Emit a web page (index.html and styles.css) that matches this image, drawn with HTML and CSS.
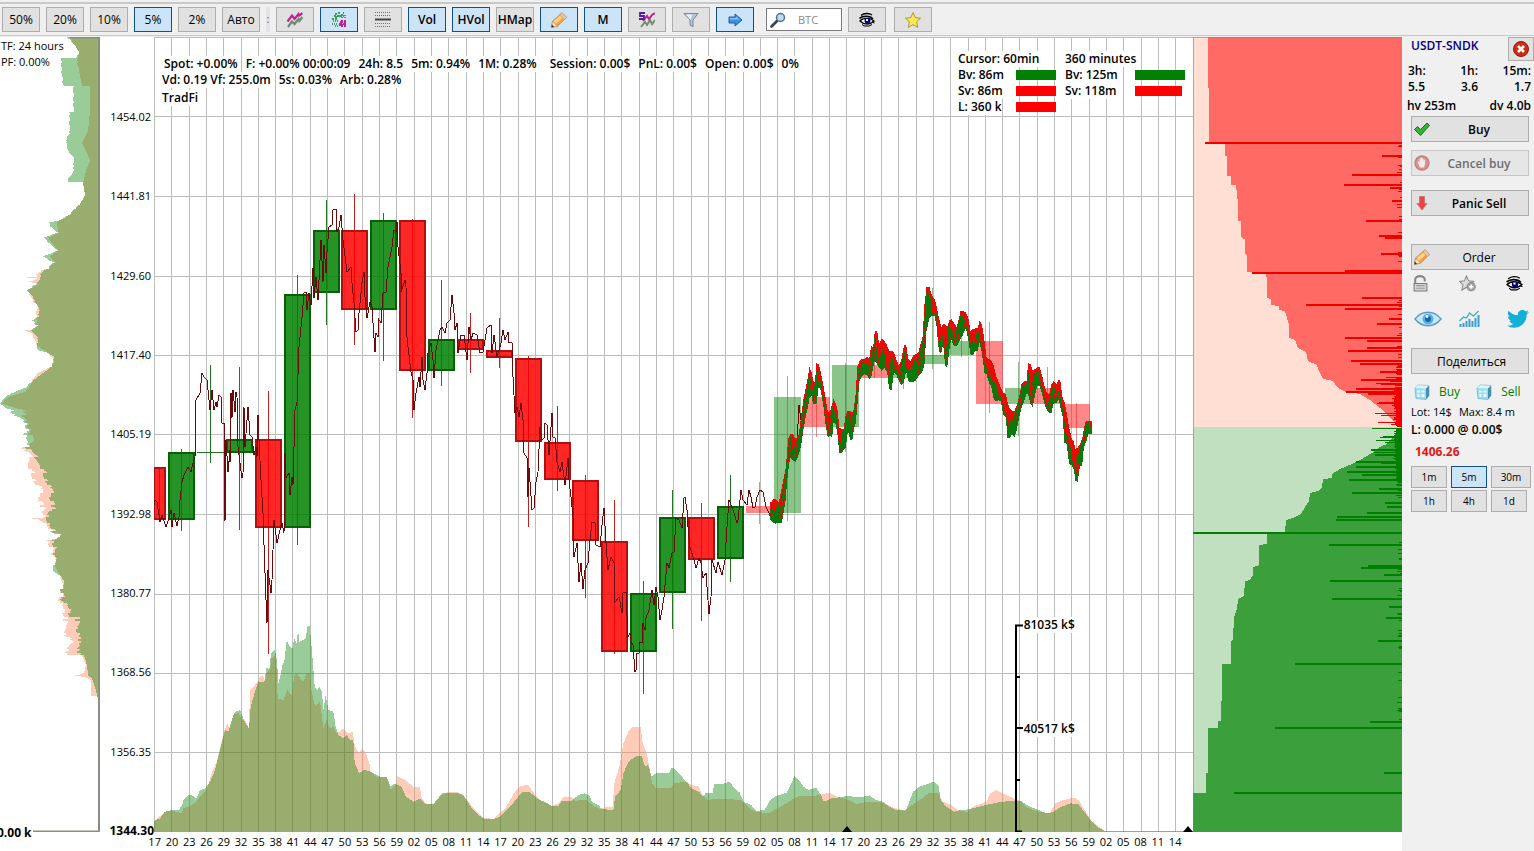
FILE: index.html
```
<!DOCTYPE html>
<html lang="ru">
<head>
<meta charset="utf-8">
<title>USDT-SNDK</title>
<link rel="stylesheet" href="styles.css">
</head>
<body>
<svg class="defs" aria-hidden="true">
  <symbol id="i-eye" viewBox="0 0 16 16">
    <path d="M2 3.500C5 1 10 .8 13 3" fill="none" stroke="#000" stroke-width="1.300"/>
    <path d="M.5 6.500C4 3.500 11 3.500 14 7" fill="none" stroke="#000" stroke-width="1.600"/>
    <path d="M1 9C4 5.500 11 5.500 15 9C11 13 5 13 1 9Z" fill="#fff" stroke="#000" stroke-width="1.300"/>
    <circle cx="8.500" cy="8.800" r="3" fill="#00007a"/><rect x="7" y="7" width="2" height="2" fill="#fff"/>
    <path d="M3 12.500l2 1.500h5l3-1.500M13 10l2.500 1" fill="none" stroke="#000"/>
  </symbol>
  <symbol id="i-pencil" viewBox="0 0 16 16">
    <path d="M.5 15.500L1.500 9 11 .8l4.600 4.700L6.500 14.200Z" fill="#f2a03c" stroke="#c98a45" stroke-width=".7"/>
    <path d="M2.500 9.300L11 2l2.300 2.300L5 12Z" fill="#ffd08a"/>
    <path d="M8.800 2.800L11.200.7l4.500 4.700-2.400 2.300Z" fill="#e9c6a6" stroke="#b98d66" stroke-width=".6"/>
    <path d="M.5 15.500l1-6.300 5 4.900Z" fill="#f8e3c3" stroke="#a88a62" stroke-width=".6"/><path d="M.4 15.600l.4-3 2.300 2.200Z" fill="#333"/>
  </symbol>
  <symbol id="i-cube" viewBox="0 0 16 16">
    <path d="M1 4l3-3 11 .5v10L12 15.500 2 14.500Z" fill="#9bdcf0" stroke="#78b4cc" stroke-width=".8"/>
    <path d="M1 4l11 .5L15 1.800 4 1.200Z" fill="#dcf5fc"/><path d="M12 4.500L15 1.800v9.700L12 15.300Z" fill="#4a8fae"/>
    <path d="M3 6.500h3v2H3zm4.500 0h3v2h-3zM3.500 10h2v3h-2zm4 0h3v3h-3z" fill="#e9fbff"/>
  </symbol>
</svg>

<header class="toolbar">
  <button class="btn">50%</button>
  <button class="btn">20%</button>
  <button class="btn">10%</button>
  <button class="btn on">5%</button>
  <button class="btn">2%</button>
  <button class="btn">Авто</button>
  <span class="grip">:</span>
  <button class="btn" aria-label="Lines"><svg class="ico" viewBox="0 0 16 16"><path d="M1 15l4-5.500 2.500 2.500 4-5 .8 2L15.500 5" fill="none" stroke="#708a70" stroke-width="2.200"/><path d="M.5 9.500l4.500-6 2.500 3.500 4-5 .8 1.500L15.500 1" fill="none" stroke="#c3218e" stroke-width="2.200"/></svg></button>
  <button class="btn on" aria-label="Clusters"><svg class="ico" viewBox="0 0 16 16"><g fill="none" stroke-width="2"><path d="M5 1v6M8 0v5M11 2v4M3 4h10M1 7h6" stroke="#3f9e5c" stroke-dasharray="2 1"/><path d="M14 3v3M12 1h2" stroke="#7a7a7a" stroke-dasharray="1 1"/><path d="M2 9h6M1 12h5M4 14h3" stroke="#4ba36a" stroke-dasharray="1 1"/><path d="M8 13h2M9 10h6M8 12h7M11 8v7M14 8v8" stroke="#c3218e" stroke-dasharray="3 1"/></g></svg></button>
  <button class="btn" aria-label="Levels"><svg class="ico" viewBox="0 0 16 16"><path d="M0 .5h16M0 3.500h16M0 11.500h16M0 14.500h16" stroke="#b33fc0" stroke-dasharray="1 1"/><path d="M0 7.500h16" stroke="#444" stroke-width="2"/></svg></button>
  <button class="btn on strong">Vol</button>
  <button class="btn on strong">HVol</button>
  <button class="btn strong">HMap</button>
  <button class="btn on" aria-label="Draw"><svg class="ico"><use href="#i-pencil"/></svg></button>
  <button class="btn on strong">M</button>
  <button class="btn" aria-label="Spread"><svg class="ico" viewBox="0 0 16 16"><path d="M2 15l4-5 2 3 3-5 2 4 3-4" fill="none" stroke="#6f8f6f" stroke-width="2"/><path d="M4 9l4-5 2 3 3-4 3-2" fill="none" stroke="#c3218e" stroke-width="2"/><path d="M6 1H1v3h4v3H0" fill="none" stroke="#5a1a9a" stroke-width="1.800"/></svg></button>
  <button class="btn" aria-label="Filter"><svg class="ico" viewBox="0 0 16 16"><path d="M1 1.500h14L10 8v7l-3-2V8Z" fill="#b4c3da" stroke="#7787a0"/><path d="M3 2.500h6L7.500 8Z" fill="#eef3fa"/></svg></button>
  <button class="btn on" aria-label="Forward"><svg class="ico" viewBox="0 0 16 16"><path d="M2 5h6V2l7 6-7 6v-3H2Z" fill="#3f8fe0" stroke="#1f5fae"/><path d="M3 6h6V4.500L12.500 7.500H3Z" fill="#85c1f5"/></svg></button>
  <label class="search"><svg class="ico" viewBox="0 0 16 16"><path d="M1.500 14.500L7 9" stroke="#345" stroke-width="2.600" stroke-linecap="round"/><circle cx="10.500" cy="5.500" r="4" fill="#b9dcf2" stroke="#52718c" stroke-width="1.500"/></svg><input type="text" placeholder="BTC" aria-label="BTC"></label>
  <button class="btn" aria-label="Watch"><svg class="ico"><use href="#i-eye"/></svg></button>
  <button class="btn spaced" aria-label="Favourites"><svg class="ico" viewBox="0 0 16 16"><path d="M8 .6l2.300 5 5.300.6-4 3.600 1.200 5.600L8 12.700l-4.800 2.700 1.200-5.600-4-3.600 5.300-.6Z" fill="#fbe94f" stroke="#a8983f"/></svg></button>
</header>

<main class="workspace">
  <section class="profile">
    <svg id="profile" viewBox="0 37 100 795" preserveAspectRatio="none"></svg>
    <p class="profile-info">TF: 24 hours<br>PF: 0.00%</p>
    <b class="profile-zero">0.00 k</b>
  </section>

  <div class="prices">
    <span>1454.02</span><span>1441.81</span><span>1429.60</span><span>1417.40</span><span>1405.19</span><span>1392.98</span><span>1380.77</span><span>1368.56</span><span>1356.35</span><b>1344.30</b>
  </div>

  <section class="plot">
    <svg id="plot" viewBox="154 37 1039 795" preserveAspectRatio="none"></svg>
    <div class="stats">
      <p class="lead"><span>Spot: +0.00%</span><span>F: +0.00% 00:00:09</span><span>24h: 8.5</span><span>5m: 0.94%</span><span>1M: 0.28%</span><span class="apart">Session: 0.00$</span><span>PnL: 0.00$</span><span>Open: 0.00$</span><span>0%</span></p>
      <p><span>Vd: 0.19 Vf: 255.0m</span><span>5s: 0.03%</span><span>Arb: 0.28%</span></p>
      <p class="tag"><span>TradFi</span></p>
    </div>
    <div class="legend">
      <span class="wide">Cursor: 60min</span><span class="wide">360 minutes</span>
      <span>Bv: 86m</span><i class="bar buy"></i><span>Bv: 125m</span><i class="bar buy long"></i>
      <span>Sv: 86m</span><i class="bar sell"></i><span>Sv: 118m</span><i class="bar sell mid"></i>
      <span>L: 360 k</span><i class="bar sell"></i>
    </div>
    <div class="scale"><b>81035 k$</b><b>40517 k$</b></div>
  </section>

  <section class="depth"><svg id="depth" viewBox="1193 37 209 795" preserveAspectRatio="none"></svg></section>
  <div class="times" id="times"></div>

  <aside class="side">
    <div class="head"><h1>USDT-SNDK</h1><button class="btn close" aria-label="Close"><svg class="ico" viewBox="0 0 16 16"><circle cx="8" cy="8" r="7.500" fill="#cf2a12" stroke="#8e1c0c"/><path d="M5 5l6 6M11 5l-6 6" stroke="#fff" stroke-width="2.600"/></svg></button></div>
    <div class="deltas"><span>3h:</span><span>1h:</span><span>15m:</span><span>5.5</span><span>3.6</span><span>1.7</span></div>
    <div class="totals"><span>hv 253m</span><span>dv 4.0b</span></div>
    <button class="act strong"><svg class="ico" viewBox="0 0 16 16"><path d="M.6 8.500L3.500 5.500l3 3L13 2l2.500 2.500L6.500 14.500Z" fill="#35b335" stroke="#14751b"/></svg><span>Buy</span></button>
    <button class="act strong cancel" disabled><svg class="ico" viewBox="0 0 16 16"><circle cx="8" cy="8" r="7" fill="#dc8f8f" stroke="#c08080" stroke-width="1.300"/><path d="M3.500 7l1-1 1 1.500V4l1-.5V7V3l1-.5 1 .5v4-3.500l1 .2V7l.5-2.500 1 .2V9l-1 3.500H6Z" fill="#f8eaea"/></svg><span>Cancel buy</span></button>
    <button class="act strong panic"><svg class="ico" viewBox="0 0 16 16"><path d="M5.500 1.500h5v7H13l-5 6.500-5-6.500h2.500Z" fill="#ee4343" stroke="#c47878"/></svg><span>Panic Sell</span></button>
    <button class="act order"><svg class="ico"><use href="#i-pencil"/></svg><span>Order</span></button>
    <div class="icons small">
      <svg viewBox="0 0 16 16"><path d="M3 8V4.500a4.500 3.500 0 0 1 9 0V6" fill="none" stroke="#888" stroke-width="2"/><path d="M2 8h12v7H2Z" fill="#d6d6d6" stroke="#777"/><path d="M4 10h8M4 12.500h8" stroke="#999"/></svg>
      <svg viewBox="0 0 16 16"><path d="M7 1l2 4.500 4.800.5-3.600 3.300 1 5L7 11.500l-4.300 2.800 1-5L.5 6l4.600-.5Z" fill="#ddd" stroke="#888"/><circle cx="11.500" cy="11" r="3.800" fill="#aaa" stroke="#888"/><path d="M11.500 9v4M9.500 11h4" stroke="#fff" stroke-width="1.300"/></svg>
      <svg><use href="#i-eye"/></svg>
    </div>
    <div class="icons big">
      <svg viewBox="0 0 28 18"><path d="M1 9C8 0 20 0 27 9C20 18 8 18 1 9Z" fill="#c8e8fa" stroke="#5d9bc2" stroke-width="1.400"/><circle cx="14" cy="9" r="5.500" fill="#5bb0e8"/><circle cx="14" cy="9" r="3" fill="#1768ad"/><circle cx="13" cy="6.500" r="1.400" fill="#fff"/></svg>
      <svg class="sq" viewBox="0 0 20 18"><path d="M0 17v-3h2v3zm3 0v-4h2v4zm3 0v-6h2v6zm3 0V9h2v8zm3 0v-6h2v6zm3 0V8h2v9zm3 0V5h2v12z" fill="#3d9fd0"/><path d="M0 11l4-4 3 1 3-5 4 3 5-5" fill="none" stroke="#3fb6bd" stroke-width="1.400"/></svg>
      <svg class="bird" viewBox="0 0 24 20"><path d="M24 2.400c-.9.400-1.800.7-2.800.8 1-.6 1.800-1.600 2.200-2.700-1 .6-2 1-3.100 1.200A4.900 4.900 0 0 0 11.900 6C7.800 5.800 4.200 3.900 1.700.9.400 3.200 1 6 3.200 7.500c-.8 0-1.600-.2-2.200-.6 0 2.300 1.600 4.400 3.900 4.900-.7.200-1.500.2-2.200.1.600 2 2.400 3.400 4.600 3.400A9.900 9.900 0 0 1 0 17.300C9 22.800 21.700 17.300 21.500 4.900 22.500 4.200 23.300 3.400 24 2.400Z" fill="#12afd6"/></svg>
    </div>
    <button class="act share"><span>Поделиться</span></button>
    <div class="cubes"><svg class="ico"><use href="#i-cube"/></svg><span>Buy</span><svg class="ico"><use href="#i-cube"/></svg><span>Sell</span></div>
    <p class="lot"><span>Lot: 14$</span><span>Max: 8.4 m</span></p>
    <p class="pos">L: 0.000 @ 0.00$</p>
    <p class="last">1406.26</p>
    <div class="frames">
      <button class="tf">1m</button><button class="tf on">5m</button><button class="tf wide">30m</button>
      <button class="tf">1h</button><button class="tf">4h</button><button class="tf">1d</button>
    </div>
  </aside>
</main>
<script src="chart.js"></script>
</body>
</html>
```
FILE: styles.css
```
* { box-sizing: border-box; }
body { margin: 0; height: 100vh; display: flex; flex-direction: column; background: #f0f0f0; color: #000; font: 12px/16px "Open Sans", "Noto Sans", sans-serif; overflow: hidden; }
p, h1 { margin: 0; font-size: 12px; }
button, input { font: inherit; color: inherit; }
.defs { position: absolute; width: 0; height: 0; }
.ico { width: 16px; height: 16px; flex: none; }
.strong { font-weight: 600; }

.toolbar { flex: none; display: flex; align-items: center; gap: 6px; margin: 2px 0 1px; padding: 3px 2px; border-top: 2px solid #c9c9c9; border-bottom: 1px solid #c9c9c9; }
.btn { flex: none; width: 38px; height: 25px; padding: 0; display: flex; align-items: center; justify-content: center; background: #e1e1e1; border: 1px solid #adadad; white-space: nowrap; }
.on { background: #cce4f7; border-color: #0f5288; }
.grip { width: 4px; height: 25px; line-height: 23px; background: #e4e4e4; text-align: center; font-size: 11px; color: #555; }
.spaced { margin-left: 2px; }
.search { display: flex; align-items: center; gap: 3px; width: 76px; height: 23px; margin-left: 6px; padding: 0 3px; background: #fff; border: 1px solid #7a7a7a; }
.search input { min-width: 0; width: 50px; padding: 0 0 0 9px; border: 0; outline: 0; background: none; font-size: 11px; }
.search input::placeholder { color: #8a8a8a; }

.workspace { flex: 1; min-height: 0; display: grid; grid-template-columns: 100px 54px minmax(0, 1fr) 209px 132px; grid-template-rows: minmax(0, 1fr) 19px; }
.profile, .plot, .depth { position: relative; background: #fff; min-height: 0; }
.profile > svg, .plot > svg, .depth > svg { display: block; width: 100%; height: 100%; }
.profile { grid-column: 1; grid-row: 1; }
.profile-info { position: absolute; left: 1px; top: 1px; font-size: 11px; }
.profile-zero { position: absolute; left: -3px; bottom: -9px; padding-right: 1px; background: #fff; z-index: 1; }
.prices { grid-column: 2; grid-row: 1 / 3; display: flex; flex-direction: column; justify-content: space-between; align-items: flex-end; padding: 72px 0 12px; background: #fff; font-size: 11px; }
.prices span { padding-right: 3px; }
.prices b { font-size: 12px; }
.plot { grid-column: 3; grid-row: 1; }
.depth { grid-column: 4; grid-row: 1; }
.workspace::after { content: ""; grid-column: 1; grid-row: 2; background: #fff; }
.times { grid-column: 3 / 5; grid-row: 2; display: flex; background: #fff; padding-right: 210px; font-size: 11px; line-height: 19px; }
.times span { flex: 1; width: 0; display: flex; justify-content: center; position: relative; left: -8px; }

.stats { position: absolute; left: 8px; top: 19px; font-weight: 600; white-space: nowrap; }
.stats p { display: flex; gap: 8px; }
.stats span { background: #fff; }
.stats .lead { padding-left: 2px; }
.stats .apart { margin-left: 5px; }
.stats .tag { margin-top: 2px; }
.legend { position: absolute; right: 8px; top: 14px; width: 227px; display: grid; grid-template-columns: 58px 49px 70px 50px; align-items: center; font-weight: 600; white-space: nowrap; }
.legend span { justify-self: start; background: #fff; }
.legend .wide { grid-column: span 2; }
.bar { width: 40px; height: 10px; }
.long { width: 50px; }
.mid { width: 47px; }
.buy { background: #008000; }
.sell { background: #f00; }
.scale { position: absolute; left: 83.7%; top: 73%; height: 15%; display: flex; flex-direction: column; justify-content: space-between; font-weight: 600; }
.scale b { font-weight: 600; background: #fff; }

.side { grid-column: 5; grid-row: 1 / 3; display: flex; flex-direction: column; padding: 0 5px 0 9px; }
.head { display: flex; margin-right: -5px; justify-content: space-between; height: 26px; }
.head h1 { color: #00007f; font-weight: 600; padding-top: 1px; }
.close { width: 26px; height: 24px; }
.deltas, .totals { margin: 0 -2px 0 -4px; font-weight: 600; }
.deltas { display: grid; grid-template-columns: repeat(3, 1fr); text-align: right; margin-left: -3px; }
.deltas span:nth-child(3n+1) { text-align: left; }
.deltas span:nth-child(3n+2) { padding-right: 12px; }
.totals { display: flex; justify-content: space-between; margin-top: 3px; }
.act { display: flex; align-items: center; height: 26px; flex: none; padding: 0 3px; background: #e1e1e1; border: 1px solid #adadad; }
.act span { flex: 1; text-align: center; padding: 1px 0 0 3px; }
.act .ico { margin-left: -1px; }
.totals + .act { margin-top: 2px; }
.cancel { margin-top: 8px; color: #6d6d6d; background: #e6e6e6; border-color: #c4c4c4; }
.panic { margin-top: 14px; }
.order { margin-top: 28px; }
.icons { display: flex; justify-content: space-between; align-items: center; }
.small { height: 26px; padding: 0 6px 0 1px; }
.small svg { width: 17px; height: 17px; }
.big { height: 46px; margin: 0 0 6px; padding-left: 3px; }
.big svg { width: 28px; height: 18px; }
.big .sq { width: 21px; margin-right: 10px; }
.big .bird { width: 22px; height: 20px; }
.cubes { display: flex; align-items: center; gap: 9px; height: 36px; padding-left: 3px; color: #008000; }
.cubes span { margin-right: 7px; }
.lot { display: flex; gap: 7px; font-size: 11px; margin-top: -6px; }
.lot, .cubes, .pos { white-space: nowrap; }
.pos { font-weight: 600; margin-top: 2px; }
.last { color: #e01b1b; font-weight: 700; margin: 6px 0 6px 4px; }
.frames { display: grid; grid-template-columns: 36px 36px 36px; gap: 2px 4px; }
.tf { width: 36px; height: 22px; padding: 0; font-size: 10px; line-height: 12px; background: #e1e1e1; border: 1px solid #adadad; }
.tf.on { background: #cce4f7; border-color: #0f5288; }
.tf.wide { width: 40px; }
```
FILE: chart.js
```
const NS = 'http://www.w3.org/2000/svg';
function add(svg, tag, attrs) {
  const el = document.createElementNS(NS, tag);
  for (const k in attrs) el.setAttribute(k, attrs[k]);
  svg.appendChild(el);
  return el;
}
const nums = s => s.trim().split(/\s+/).map(p => p.split(',').map(Number));
let seed = 7;
const rnd = () => (seed = (seed * 16807) % 2147483647) / 2147483647;

// Linear interpolation of [key, value] pairs.
function at(points, k) {
  for (let i = 1; i < points.length; i++) {
    if (k <= points[i][0]) {
      const [a, va] = points[i - 1], [b, vb] = points[i];
      return b === a ? vb : va + (vb - va) * Math.max(0, k - a) / (b - a);
    }
  }
  return points[points.length - 1][1];
}
const GREEN = 'rgba(0,128,0,.4)', CORAL = 'rgba(255,127,80,.4)';

// Daily volume profile: y, left edge
const profileBuy = nums(`37,68 45,75 52,79 57,76 58,61 75,62 85,63 86,73 111,74 112,69 130,70 142,66 150,68 157,74 172,73 178,68 181,67 182,83 195,85 203,80 210,74 215,68 220,60 222,49 228,52 232,57 237,44 243,50 250,58 256,43 262,53 268,48 272,42 277,40 282,38 290,27 296,33 303,36 310,40 317,38 320,32 325,37 330,30 337,38 345,37 350,38 352,47 356,54 366,52 372,43 379,34 383,30 387,26 391,15 396,6 403,0 407,5 410,12 413,10 416,20 421,25 430,28 438,24 446,27 452,32 458,38 465,42 475,45 485,48 488,52 500,52 508,53 515,48 525,49 533,55 534,62 538,60 540,55 555,53 562,55 570,53 575,59 580,63 588,60 597,62 607,67 616,71 617,78 630,76 636,79 645,80 654,78 655,84 665,87 675,88 678,92 690,96 696,97`);
const profileSell = nums(`37,70 52,79 60,77 75,80 85,82 86,90 110,90 130,88 143,82 150,86 160,90 170,86 182,83 195,85 203,80 210,74 215,68 220,60 222,57 232,58 237,48 243,53 250,58 256,50 262,55 268,48 270,42 274,37 276,36 277,27 278,37 281,30 284,38 290,27 296,31 300,33 305,38 315,36 325,37 329,33 330,24 333,32 345,37 352,47 360,54 366,52 372,38 378,33 383,32 391,25 397,8 403,2 407,14 410,24 416,25 421,27 430,30 440,32 446,26 450,22 452,28 458,32 465,30 475,33 485,36 487,42 500,40 510,44 517,45 518,34 519,42 530,50 534,62 538,60 540,50 555,52 575,59 585,61 597,60 610,62 617,66 625,65 635,64 640,73 645,70 650,68 654,65 655,82 665,86 672,84 675,78 678,88 680,91 695,91 696,97`);
function drawProfile() {
  const svg = document.getElementById('profile');
  const jitter = [];
  for (let y = 37; y < 832; y++) jitter.push((rnd() - .5) * (y < 220 ? 1.500 : y < 520 ? 6 : 4));
  for (const [pts, color] of [[profileSell, CORAL], [profileBuy, GREEN]]) {
    let d = 'M100 37';
    for (let y = 37; y < 832; y++) {
      const base = y > 696 ? 98 : at(pts, y);
      const x = Math.max(0, Math.min(98, Math.round(base + (base < 80 ? jitter[y - 37 >> 1] : 0))));
      d += `L${x} ${y}V${y + 1}`;
    }
    add(svg, 'path', { d: d + 'L100 832Z', fill: color, 'shape-rendering': 'crispEdges' });
  }
  add(svg, 'path', { d: 'M100 37.500H70M99 37V831M30 831.500H99', fill: 'none', stroke: '#87907a', 'stroke-width': 2 });
}

// Candles: left, right, open/close top and bottom, wick top and bottom, side
const candles = `154,165,468,519,468,520,r 169,194,453,519,449,531,g 197,224,452,452,365,463,g 227,252,440,452,367,530,g 256,281,440,527,391,654,r 285,310,295,527,275,545,g 314,339,231,292,200,325,g 342,367,231,309,194,345,r 371,396,221,309,213,361,g 400,425,221,370,219,418,r 429,454,340,370,280,386,g 458,483,340,349,313,373,r 487,512,351,357,318,368,r 516,541,359,441,356,527,r 545,570,443,479,406,491,r 573,598,481,540,475,598,r 602,627,542,651,500,654,r 631,656,594,651,581,694,g 660,685,518,592,490,629,g 689,714,518,559,503,621,r 718,743,507,558,475,582,g`;
const paleCandles = `746,772,506,513,482,524,r 774,801,397,513,376,521,g 803,830,397,427,370,437,r 832,859,365,427,363,452,g 861,888,365,378,356,378,r 890,917,374,378,362,389,g 919,945,355,364,288,369,g 948,974,341,355,332,357,g 976,1003,341,404,322,413,r 1005,1031,388,404,362,436,g 1034,1060,388,404,367,406,r 1063,1090,404,428,403,479,r`;

const line1 = nums(`10,990 14,960 20,965 30,1025 36,1005 48,1040 58,1015 63,990 66,1042 72,1000 80,1038 86,1010 90,960 95,905 103,885 115,860 124,875 130,850 136,830 138,660 150,640 155,580 162,590 170,600 176,660 180,690 186,630 192,690 197,665 202,682 206,645 212,650 216,730 221,730 223,1020 226,1022 229,780 233,875 240,810 240,845 243,640 247,715 250,630 254,695 258,635 262,650 264,800 270,850 277,895 280,880 283,680 286,800 293,680 300,765 306,770 312,825 318,800 320,830 324,705 328,780 333,900 338,1000 342,1095 348,1260 352,1330 355,1170 362,1240 366,1200 372,1020 380,1090 390,1050 396,1030 402,1060 404,820 408,895 416,880 420,945 426,890 430,915 434,690 440,665 446,500 455,410 462,340 468,335 472,390 478,340 482,375 488,265 492,355 498,290 503,360 513,180 519,305 522,195 527,280 532,215 538,140 546,135 550,90 558,88 562,155 568,140 573,105 578,180 590,275 602,260 606,310 612,370 617,455 623,450 628,400 636,310 642,275 646,350 652,415 660,365 666,380 670,430 675,515 679,460 683,470 685,415 692,430 700,340 708,335 715,260 725,200 732,150 738,155 742,125 745,200 752,280 754,335 765,300 768,320 770,470 775,500 783,575 788,600 792,690 798,640 808,590 810,620 816,530 820,600 826,630 830,580 835,520 843,490 848,540 852,595 858,510 866,465 870,450 877,440 885,460 892,430 900,420 906,345 912,400 916,450 922,430 925,520 932,465 943,465 950,540 957,440 963,480 970,460 982,465 990,520 1000,515 1004,480 1012,445 1022,435 1026,520 1032,465 1042,530 1052,490 1060,450 1066,480 1073,455 1077,490 1085,485 1090,590 1094,700`).map(([x, y]) => [150 + x / 3, 180 + y / 3]);
const line2 = nums(`45,250 52,230 58,260 62,220 68,270 72,370 80,385 84,500 88,415 96,540 103,535 108,455 114,425 120,290 126,330 132,325 136,280 141,285 147,375 156,250 160,320 166,325 172,395 179,425 186,395 194,465 204,385 208,450 214,500 218,560 222,680 230,640 236,755 243,700 249,778 255,720 264,700 270,630 276,575 284,580 288,645 300,650 305,585 312,535 318,640 325,720 332,680 342,700 346,815 357,800 365,850 370,790 378,785 384,920 390,910 393,935 398,945 404,1025 409,1020 412,970 417,970 420,935 427,940 430,880 434,900 438,865 448,840 455,780 461,825 468,770 473,800 480,870 487,840 492,800 500,700 508,715 515,670 521,665 527,565 536,570 545,595 551,505 556,500 560,540 565,590 570,650 583,690 588,715 596,685 602,700 608,745 618,730 627,853 632,800 637,690 648,730 655,695 666,735 674,690 680,590 688,510 696,530 701,550 710,580 714,570 723,480 730,510 740,525 747,480 753,500 760,535 766,530 772,500 780,480 790,485 797,530 806,550 812,565 840,540 862,400 885,350 892,340 897,225 903,270 908,260`).map(([x, y]) => [500 + x / 3, 330 + y / 3]);

// Live price ribbon: x, top, bottom
const ribbon = nums(`92,700,748 97,690,755 105,690,758 115,700,755 124,655,755 130,625,720 135,600,690 139,560,640 143,510,600 149,495,560 158,495,570 166,510,572 175,495,550 182,440,525 188,395,480 196,355,435 202,325,410 207,295,380 213,310,375 218,335,400 223,340,400 228,283,395 235,285,345 241,310,360 248,345,400 255,385,460 262,430,500 269,425,495 275,405,500 279,390,455 286,405,460 292,425,500 296,475,545 302,480,548 309,480,538 316,435,530 322,425,480 329,425,505 335,430,510 340,420,475 346,370,455 350,295,410 357,275,330 364,268,315 372,270,310 380,262,312 386,270,325 392,230,320 398,235,290 403,185,270 410,185,280 416,225,290 424,208,300 432,215,290 440,230,305 446,245,355 453,245,358 460,250,305 467,270,310 475,290,330 482,275,342 490,230,335 497,228,300 503,270,330 510,275,333 518,260,332 526,255,328 534,250,315 540,225,310 546,205,300 552,105,280 558,55,180 567,55,140 574,78,135 582,90,135 588,110,165 595,145,240 602,175,248 608,165,220 614,165,285 620,175,290 626,155,240 632,150,205 640,160,225 648,175,225 655,150,215 660,125,205 668,125,190 676,130,170 684,150,210 690,185,250 697,180,252 704,178,240 711,178,240 717,157,215 724,165,245 732,215,305 738,265,310 745,270,335 752,275,345 760,290,385 767,320,390 774,340,388 781,355,390 788,370,430 796,375,440 801,400,500 808,420,502 815,425,490 822,425,497 828,410,480 836,385,440 843,345,410 851,335,390 858,335,370 863,282,370 870,285,400 877,305,408 884,300,370 890,295,345 898,295,345 906,325,375 912,350,400 918,370,415 926,375,425 933,345,425 940,335,395 948,345,395 955,330,385 960,340,410 966,385,435 972,400,515 978,430,518 986,475,580 994,510,582 1001,520,600 1004,540,630 1012,535,632 1018,525,585 1025,510,585 1030,480,530 1036,455,515 1044,455,490 1053,455,488`).map(([x, a, b]) => [740 + x / 3, 270 + a / 3, 270 + b / 3]);

const volLeft = ([x, y]) => [150 + x / 3, 610 + y / 3];
const volRight = ([x, y]) => [600 + x / 2.613, 610 + y / 3];
const volBuy = nums(`12,633 30,625 45,605 65,600 85,600 97,585 100,570 115,555 125,555 140,565 150,540 165,535 180,515 195,480 205,440 215,400 225,360 235,365 245,330 255,305 270,300 280,325 290,345 297,355 302,290 312,255 325,215 343,215 350,170 358,180 363,130 375,120 381,150 385,220 393,190 397,165 403,155 410,92 420,110 428,115 432,85 440,100 444,60 448,95 460,90 467,85 472,50 478,45 482,80 488,150 494,230 502,240 508,230 516,245 520,300 527,255 535,300 550,305 556,345 565,375 580,385 590,375 600,390 610,390 614,460 628,490 640,480 655,482 670,490 690,500 710,500 722,530 735,520 755,530 768,560 790,575 810,565 825,582 850,583 875,550 895,550 915,548 935,552 950,570 965,595 985,615 1005,627 1030,627 1050,620 1070,600 1085,585 1105,560 1120,545 1135,545 1150,555 1165,568 1190,578 1205,588 1225,588 1235,572 1265,572 1285,555 1305,550 1320,558 1325,575 1345,585 1355,597 1390,600 1395,560 1412,540 1420,490 1435,455 1455,440 1475,437 1485,470 1495,465 1505,500 1518,490`).map(volLeft).concat(nums(`155,490 180,490 188,472 198,480 210,495 225,515 240,535 258,545 270,560 275,550 295,550 298,522 320,522 338,515 348,530 365,548 375,575 395,585 408,603 430,600 445,570 460,558 488,548 500,520 508,498 520,510 532,530 545,540 565,533 575,550 585,575 605,565 625,562 645,558 680,562 705,556 720,570 740,575 755,590 775,600 800,600 808,575 818,545 835,530 855,522 872,515 885,530 890,570 905,590 925,605 945,600 965,598 990,590 1020,582 1050,575 1100,572 1115,585 1145,600 1170,610 1185,605 1205,590 1230,580 1250,583 1265,605 1285,635 1305,655 1320,663 1550,664`).map(volRight));
const volSell = nums(`12,633 30,618 45,605 65,602 95,610 100,595 120,588 140,575 150,560 165,545 175,525 185,490 200,455 210,415 222,365 232,340 240,355 250,315 265,308 275,330 285,330 297,355 300,240 312,230 328,205 338,195 345,215 350,190 360,175 364,145 374,138 379,160 383,265 400,270 412,240 425,255 432,200 440,188 450,205 460,215 470,190 480,190 484,240 495,290 510,275 516,320 520,355 530,330 540,355 550,350 560,370 570,365 580,355 595,370 609,365 612,400 625,430 638,415 650,435 658,460 662,485 680,500 710,500 722,540 738,525 742,498 765,510 790,530 810,532 815,565 828,580 850,583 875,555 895,545 920,545 940,555 955,575 975,600 1000,622 1030,627 1048,610 1065,595 1080,570 1095,545 1110,528 1135,525 1145,540 1160,560 1175,572 1205,588 1225,580 1240,562 1262,560 1275,572 1310,570 1330,588 1350,597 1370,590 1388,590 1393,520 1408,470 1420,400 1435,365 1450,350 1472,350 1478,400 1490,430 1498,470 1506,520 1518,535`).map(volLeft).concat(nums(`185,535 195,520 225,515 240,525 258,530 265,548 280,570 300,567 340,567 372,572 390,595 405,605 440,610 455,600 480,585 500,570 520,558 560,558 580,552 600,549 620,560 650,570 670,582 700,575 740,578 760,590 795,603 815,585 835,570 860,548 885,548 895,575 915,583 935,600 960,607 975,590 1010,575 1020,550 1035,540 1050,548 1070,560 1100,573 1115,592 1145,605 1175,610 1190,580 1210,570 1240,563 1252,572 1265,598 1285,633 1320,663 1550,664`).map(volRight));

function drawCandles(svg, text, pale) {
  for (const item of text.split(' ')) {
    const [l, r, t, b, wt, wb, side] = item.split(',');
    const g = side === 'g', x = Math.floor((+l + +r) / 2) + .5;
    const box = { x: l, y: t, width: r - l, height: Math.max(b - t, 1) };
    add(svg, 'path', { d: `M${x} ${wt}V${wb}`, stroke: g ? '#1f7a1f' : '#c42020', 'stroke-opacity': pale ? .5 : 1 });
    if (pale) add(svg, 'rect', { ...box, fill: g ? '#138c13' : '#ff1414', 'fill-opacity': .5 });
    else if (t === b) add(svg, 'path', { d: `M${l} ${+t + .5}H${r}`, stroke: '#1f7a1f' });
    else add(svg, 'rect', { ...box, fill: g ? '#008000' : '#f00', 'fill-opacity': .85, stroke: g ? '#066006' : '#b01010', 'stroke-width': 2 });
  }
}

function drawPlot() {
  const svg = document.getElementById('plot');
  let grid = 'M154 37.500H1193M154.500 37V832';
  for (let i = 1; i <= 60; i++) grid += `M${Math.round(154 + i * 17.310) + .5} 37V832`;
  for (const y of [116, 196, 276, 355, 434, 514, 594, 673, 752]) grid += `M154 ${y + .5}H1193`;
  add(svg, 'path', { d: grid, stroke: '#bdbdbd', fill: 'none' });
  drawCandles(svg, candles, false);
  drawCandles(svg, paleCandles, true);
  for (const [pts, color] of [[volSell, CORAL], [volBuy, GREEN]]) {
    let d = 'M154 832';
    for (let x = 154; x < 1193; x++) d += `V${Math.round(at(pts, x + .5))}H${x + 1}`;
    add(svg, 'path', { d: d + 'V832Z', fill: color, 'shape-rendering': 'crispEdges' });
  }
  for (const line of [line1, line2])
    add(svg, 'polyline', { points: line.map(p => p.map(Math.round).join()).join(' '), fill: 'none', stroke: '#6b0a0a', 'stroke-width': 1, 'shape-rendering': 'crispEdges' });

  // Each column is red above and green below, with a mottled middle.
  let green = '', red = '';
  const top = ribbon.map(p => [p[0], p[1]]), bottom = ribbon.map(p => [p[0], p[2]]);
  for (let x = 770; x < 1092; x++) {
    const a = Math.round(at(top, x)) - 1, b = Math.round(at(bottom, x)) + 1;
    const slope = at(top, x + 3) + at(bottom, x + 3) - at(top, x - 3) - at(bottom, x - 3);
    const share = slope < -8 ? .15 : slope > 8 ? .6 : .4;
    green += `M${x} ${a}h1V${b}h-1Z`;
    red += `M${x} ${a}h1v${Math.round((b - a) * share * (.6 + rnd() * .8))}h-1Z`;
    for (let y = a; y < b - 3; y += 2) if (rnd() < .45) red += `M${x} ${y}h1v1h-1Z`;
  }
  add(svg, 'path', { d: green, fill: '#0a780a', 'shape-rendering': 'crispEdges' });
  add(svg, 'path', { d: red, fill: '#e80c08', 'shape-rendering': 'crispEdges' });

  add(svg, 'path', { d: 'M1023 625.500H1016V831.500H1022', fill: 'none', stroke: '#000', 'stroke-width': 2 });
  add(svg, 'path', { d: 'M1016 677H1020M1016 728H1023M1016 780H1020', stroke: '#000', 'stroke-width': 2 });
  add(svg, 'path', { d: 'M842 832l5-6 5 6ZM1183 832l5-6 5 6Z', fill: '#000' });
}

// Order book: cumulative left edge and separate levels
const book = ([x, y]) => [1180 + x / 3, 30 + y / 1.910];
const asks = nums(`84,14 84,110 87,110 87,215 135,215 135,240 141,240 141,278 153,278 153,297 169,297 174,330 174,365 182,365 182,393 190,400 195,400 195,428 201,430 201,463 258,465 261,480 261,512 273,514 273,525 296,527 298,534 314,537 320,550 326,562 327,588 345,592 354,607 378,615 384,632 412,640 418,652 428,666 458,670 475,683 498,691 540,695 570,707 600,722 630,740 655,757 666,759`).map(book);
const bids = nums(`666,759 650,765 640,778 620,790 600,797 575,808 545,820 515,828 480,838 457,848 455,855 428,858 426,872 415,880 390,885 386,900 375,912 362,925 340,932 318,936 315,960 261,962 261,982 237,984 237,1022 220,1026 218,1040 210,1050 195,1052 192,1082 175,1086 172,1105 163,1122 159,1165 153,1167 153,1210 126,1210 126,1280 122,1285 122,1320 114,1320 114,1334 84,1334 84,1420 78,1420 78,1458 40,1458 40,1532`).map(book);
const askLevels = nums(`75,215 606,241 516,277 492,296 630,302 636,326 558,365 597,393 615,397 603,428 495,461 216,464 545,512 378,525 495,533 627,552 591,561 495,588 561,594 561,607 504,613 514,633 540,637 600,653 543,669 603,676 528,685 498,691 565,696 597,712`).map(book);
const bidLevels = nums(`573,802 585,812 528,826 528,834 500,844 545,849 507,859 597,876 516,884 615,903 621,912 561,923 471,930 468,936 39,961 447,983 563,1024 543,1028 612,1041 450,1052 456,1086 627,1102 618,1123 594,1167 345,1210 570,1322 285,1334 612,1420 162,1458`).map(book);
function drawDepth() {
  const svg = document.getElementById('depth');
  const R = 1402;
  add(svg, 'rect', { x: 1193, y: 37, width: 209, height: 390, fill: '#ffdfd3' });
  add(svg, 'rect', { x: 1193, y: 427, width: 209, height: 405, fill: '#c0e0c0' });
  const poly = (pts, fill) => add(svg, 'polygon', { points: [[R, pts[0][1]], ...pts, [R, pts[pts.length - 1][1]]].map(p => p.map(Math.round).join()).join(' '), fill, 'shape-rendering': 'crispEdges' });
  poly(asks, '#ff6b64');
  poly(bids, '#3b9f3b');
  const bars = (levels, color, from, to, near) => {
    let d = '';
    for (const [x, y] of levels) d += `M${Math.round(x)} ${Math.round(y) - 1}H${R}v2H${Math.round(x)}Z`;
    for (let y = from; y < to; y++) {
      const k = Math.max(0, 1 - Math.abs(y - near) / 75);
      const x = Math.round(R - 2 - rnd() * 3 - k * 4 - (rnd() < k * .3 ? rnd() * 22 : 0));
      if (rnd() < .2 + k) d += `M${x} ${y}H${R}v1H${x}Z`;
    }
    add(svg, 'path', { d, fill: color, 'shape-rendering': 'crispEdges' });
  };
  bars(askLevels, '#ee0000', 142, 427, 410);
  bars(bidLevels, '#008000', 428, 720, 440);
  add(svg, 'path', { d: 'M1193 37.500H1402M1193.500 37V832', stroke: '#808080', 'stroke-opacity': .6 });
}

function drawTimes() {
  const box = document.getElementById('times');
  for (let i = 0; i < 60; i++) {
    const s = document.createElement('span');
    s.textContent = String((17 + i * 3) % 60).padStart(2, '0');
    box.appendChild(s);
  }
}
drawProfile();
drawPlot();
drawDepth();
drawTimes();
```
